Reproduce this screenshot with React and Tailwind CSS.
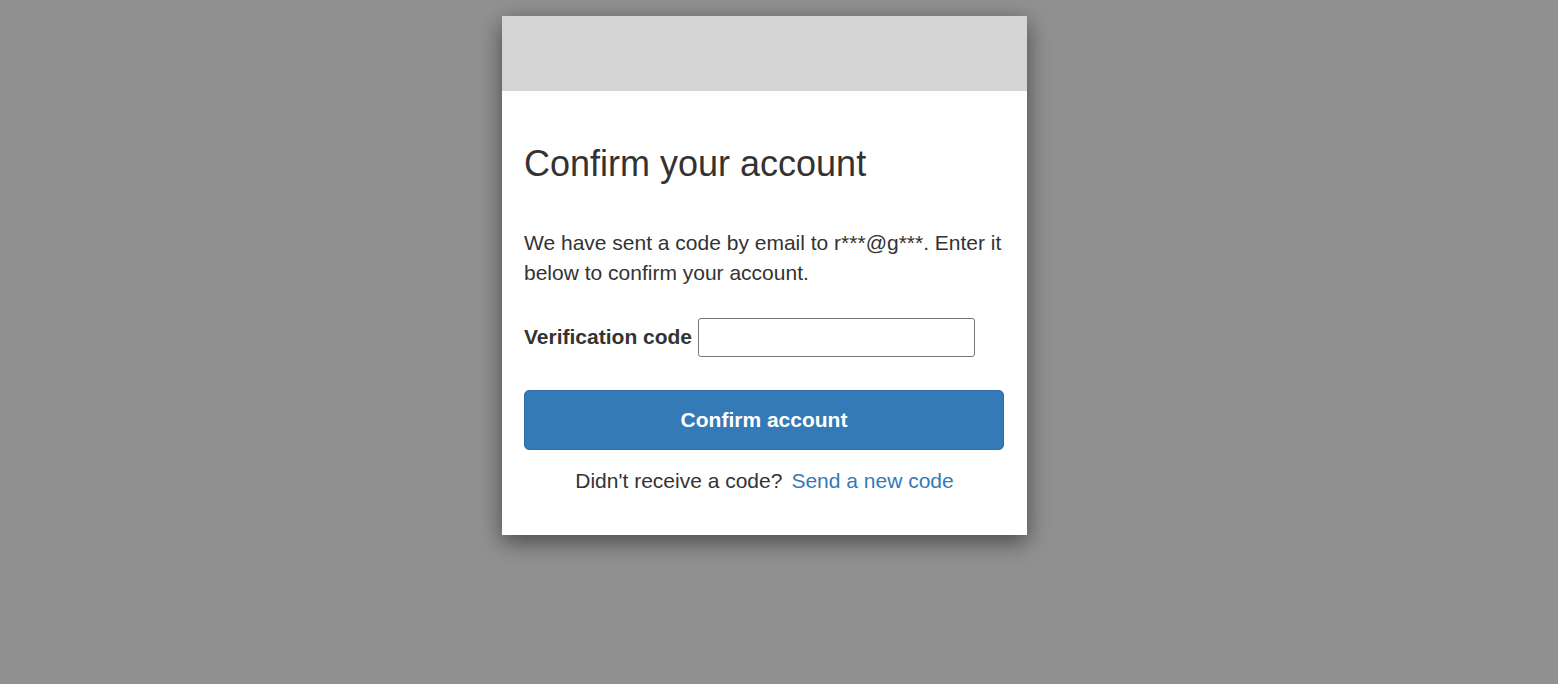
export default function App() {
  return (
    <div className="min-h-[684px] w-full bg-[#919191] pt-4 pr-[29px] flex justify-center items-start" style={{ fontFamily: '"Liberation Sans", Arial, Helvetica, sans-serif' }}>
      <div className="w-[525px] bg-white shadow-[0_7px_22px_rgba(0,0,0,0.5)]">
        <div className="h-[75px] bg-[#d4d4d4]" />
        <div className="px-[22px] pt-[53px] pb-[39px] text-[#333333]">
          <h1 className="text-[36px] leading-[1.1] font-normal">Confirm your account</h1>
          <p className="mt-[44px] text-[21px] leading-[30px]">
            We have sent a code by email to r***@g***. Enter it below to confirm your account.
          </p>
          <div className="mt-[30px] flex items-center">
            <label className="text-[21px] font-bold leading-[30px]">Verification code</label>
            <input
              type="text"
              className="ml-[6px] h-[39px] w-[277px] rounded-[3px] border border-[#767676] bg-white px-2 text-[21px] outline-none"
            />
          </div>
          <button className="mt-[33px] flex h-[60px] w-[480px] items-center justify-center rounded-[5px] border border-[#2e6da4] bg-[#337ab7] text-[21px] font-bold text-white">
            Confirm account
          </button>
          <div className="mt-[16px] flex justify-center text-[21px] leading-[30px]">
            <span>Didn't receive a code?</span>
            <a href="#" className="ml-[9px] text-[#337ab7]">Send a new code</a>
          </div>
        </div>
      </div>
    </div>
  );
}
